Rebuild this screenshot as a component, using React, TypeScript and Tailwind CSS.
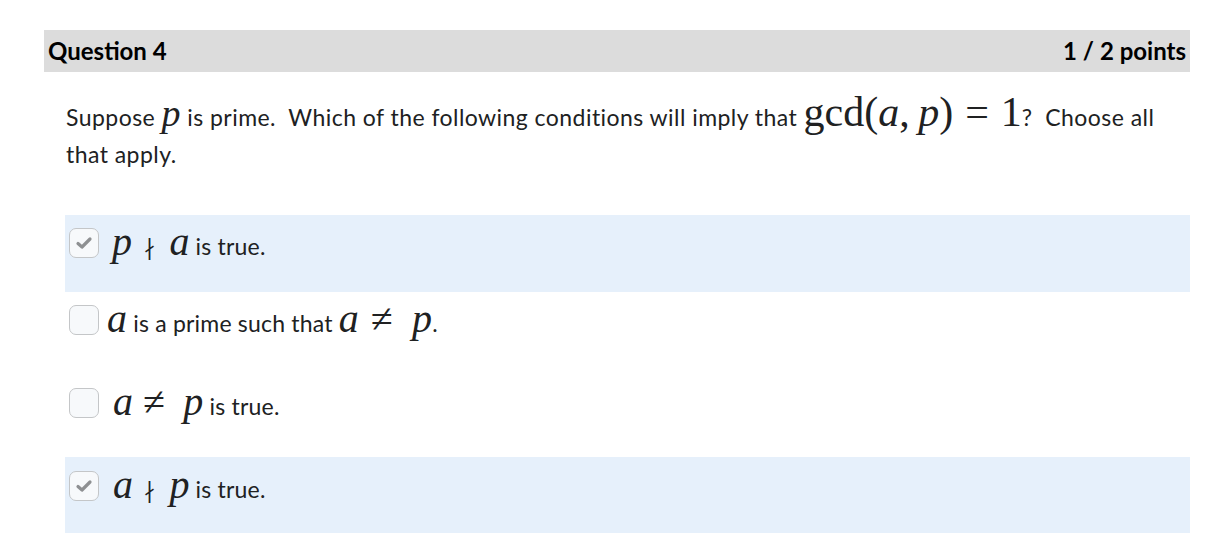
import React from "react";

const math = "font-['Liberation_Serif',serif] italic leading-none";
const rel = "font-['Liberation_Serif',serif] leading-none";

function Box(props: { checked: boolean }) {
    return (
        <div className="w-[30px] h-[30px] shrink-0 rounded-[7px] border border-[#c4c6c8] bg-[#f7f9fb] flex items-center justify-center">
            {props.checked && (
                <svg width="20" height="20" viewBox="0 0 20 20">
                    <path
                        d="M4 10.5 L8 14 L16 6"
                        fill="none"
                        stroke="#8e9092"
                        strokeWidth="3.2"
                        strokeLinecap="round"
                        strokeLinejoin="round"
                    />
                </svg>
            )}
        </div>
    );
}

function Option(props: {
    checked: boolean;
    shaded: boolean;
    height: string;
    pad: string;
    children: React.ReactNode;
}) {
    return (
        <div
            className={`${props.height} ${props.pad} pl-[4px] flex items-start gap-[10px] ${
                props.shaded ? "bg-[#e6f0fb]" : "bg-white"
            }`}
        >
            <Box checked={props.checked} />
            <div className="flex items-baseline text-[23px] tracking-[0.2px] text-[#202122] leading-[30px] -mt-[6px]">
                {props.children}
            </div>
        </div>
    );
}

export default function App() {
    return (
        <div className="w-[1226px] h-[560px] bg-white font-['Lato',sans-serif] text-[#202122] pt-[30px]">
            {/* Header */}
            <div className="ml-[44px] w-[1146px] h-[42px] bg-[#dcdcdc] flex items-center justify-between px-[4px]">
                <div className="font-bold text-[24px] text-black">Question 4</div>
                <div className="font-bold text-[24px] text-black">1 / 2 points</div>
            </div>

            {/* Question */}
            <div className="ml-[66px] w-[1110px] mt-[19px] text-[23px] tracking-[0.45px] leading-[37px]">
                Suppose{" "}
                <span className={`${math} text-[38px]`}>p</span> is prime.&nbsp; Which of
                the following conditions will imply that{" "}
                <span className="font-['Liberation_Serif',serif] text-[42px] leading-none tracking-normal">
                    gcd(<span className="italic">a</span>,&thinsp;
                    <span className="italic">p</span>)
                    <span className="mx-[12px]">=</span>1
                </span>
                ?&nbsp; Choose all that apply.
            </div>

            {/* Options */}
            <div className="ml-[65px] w-[1125px] mt-[42px] flex flex-col">
                <Option checked shaded height="h-[77px]" pad="pt-[13px]">
                    <span className={`${math} text-[40px] ml-[3px]`}>p</span>
                    <span className={`${rel} text-[22px] ml-[12px] mr-[14px]`}>∤</span>
                    <span className={`${math} text-[40px] mr-[6px]`}>a</span>
                    <span>is true.</span>
                </Option>
                <Option checked={false} shaded={false} height="h-[82px]" pad="pt-[13px]">
                    <span className={`${math} text-[40px] mr-[6px] -ml-[2px]`}>a</span>
                    <span>is a prime such that</span>
                    <span className={`${math} text-[40px] ml-[6px]`}>a</span>
                    <span className={`${rel} text-[40px] ml-[12px] mr-[19px]`}>≠</span>
                    <span className={`${math} text-[40px]`}>p</span>
                    <span>.</span>
                </Option>
                <Option checked={false} shaded={false} height="h-[83px]" pad="pt-[14px]">
                    <span className={`${math} text-[40px] ml-[4px]`}>a</span>
                    <span className={`${rel} text-[40px] ml-[10px] mr-[18px]`}>≠</span>
                    <span className={`${math} text-[40px] mr-[6px]`}>p</span>
                    <span>is true.</span>
                </Option>
                <Option checked shaded height="h-[76px]" pad="pt-[14px]">
                    <span className={`${math} text-[40px] ml-[4px]`}>a</span>
                    <span className={`${rel} text-[22px] ml-[11px] mr-[14px]`}>∤</span>
                    <span className={`${math} text-[40px] mr-[6px]`}>p</span>
                    <span>is true.</span>
                </Option>
            </div>
        </div>
    );
}
